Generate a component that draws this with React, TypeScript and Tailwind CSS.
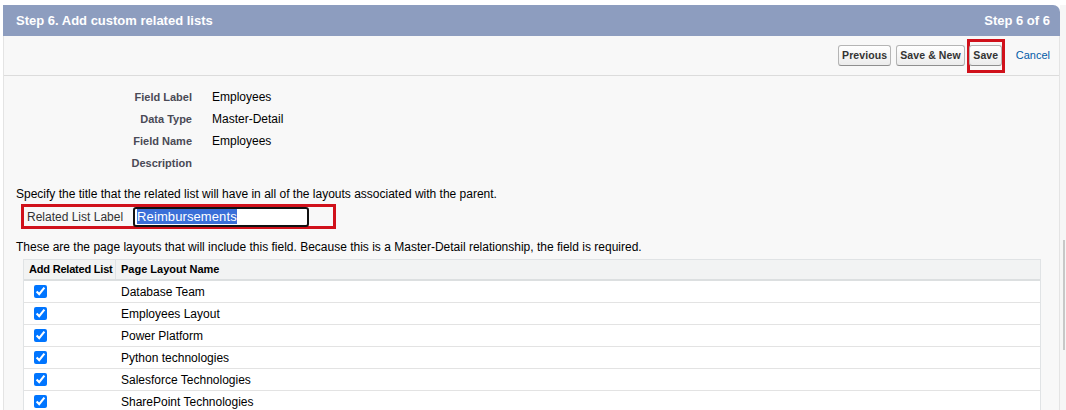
import React from "react";

const rows = [
  "Database Team",
  "Employees Layout",
  "Power Platform",
  "Python technologies",
  "Salesforce Technologies",
  "SharePoint Technologies",
];

const fields: [string, string][] = [
  ["Field Label", "Employees"],
  ["Data Type", "Master-Detail"],
  ["Field Name", "Employees"],
  ["Description", ""],
];

function Btn({ children }: { children: React.ReactNode }) {
  return (
    <button className="h-[21px] px-[3px] rounded-[3px] border border-[#b5b5b5] border-b-[#8f8f8f] bg-gradient-to-b from-white to-[#ececec] text-[10.5px] font-bold text-[#333] leading-none tracking-[0.1px]">
      {children}
    </button>
  );
}

export default function App() {
  return (
    <div
      className="w-[1066px] h-[410px] overflow-hidden bg-white flex pt-[5px] pl-[3px]"
      style={{ fontFamily: '"Liberation Sans", Arial, sans-serif' }}
    >
      <div className="w-[1057px] flex flex-col shrink-0">
        <div className="h-[31px] shrink-0 bg-[#8d9dbf] rounded-tr-[7px] flex items-center justify-between pl-[13px] pr-[10px] text-white font-bold text-[13px]">
          <span>Step 6. Add custom related lists</span>
          <span>Step 6 of 6</span>
        </div>
        <div className="flex-1 bg-[#f8f8f8] border-l border-r border-[#e4e4e4]">
          <div className="h-[40px] flex items-center justify-end border-b border-[#dcdcdc] pr-[9px]">
            <div className="flex items-center gap-[5px]">
              <Btn>Previous</Btn>
              <Btn>Save &amp; New</Btn>
            </div>
            <div className="ml-[2px] w-[38px] h-[34px] border-[3px] border-[#d0111b] flex items-center justify-center">
              <Btn>Save</Btn>
            </div>
            <span className="ml-[11px] text-[11px] text-[#015ba7]">Cancel</span>
          </div>

          <div className="pt-[10px] flex flex-col">
            {fields.map(([l, v]) => (
              <div key={l} className="h-[22px] flex items-center">
                <div className="w-[188px] text-right text-[11px] font-bold text-[#4a4a56]">{l}</div>
                <div className="ml-[20px] text-[12px] text-black">{v}</div>
              </div>
            ))}
          </div>

          <div className="mt-[13px] pl-[12px] text-[12px] text-black leading-[14px]">
            Specify the title that the related list will have in all of the layouts associated with the parent.
          </div>
          <div className="ml-[17px] mt-[3px] w-[315px] h-[25px] border-[3px] border-[#d0111b] flex items-center">
            <span className="ml-[3px] text-[12px] text-[#333]">Related List Label</span>
            <div className="ml-[10px] w-[176px] h-[20px] border-2 border-[#111] rounded-[3px] bg-white flex items-center pl-[2px]">
              <span className="bg-[#3a6fd8] text-white text-[13px] leading-[15px] tracking-[0.1px]">Reimbursements</span>
            </div>
          </div>
          <div className="mt-[11px] pl-[12px] text-[12px] text-black leading-[14px]">
            These are the page layouts that will include this field. Because this is a Master-Detail relationship, the field is required.
          </div>

          <div className="mt-[5px] ml-[19px] mr-[18px] border border-[#e0e3e5] bg-white">
            <div className="h-[21px] flex items-center bg-[#f2f3f3] border-b-2 border-[#dcdfe0] text-[11px] font-bold text-black">
              <div className="w-[92px] h-full flex items-center pl-[5px] border-r border-[#e0e3e5] whitespace-nowrap tracking-[-0.2px]">Add Related List</div>
              <div className="pl-[5px] whitespace-nowrap">Page Layout Name</div>
            </div>
            {rows.map((r) => (
              <div key={r} className="h-[22px] flex items-center border-b border-[#e3e3e3] text-[12px] text-black">
                <div className="w-[92px] flex items-center pl-[10px]">
                  <input type="checkbox" defaultChecked readOnly className="w-[13px] h-[13px] m-0 accent-[#0075ff]" />
                </div>
                <div className="pl-[5px]">{r}</div>
              </div>
            ))}
          </div>
        </div>
      </div>
      <div className="flex-1 bg-[#f6f6f6] flex justify-end pr-[1px]">
        <div className="w-[2px] mt-[235px] h-[110px] bg-[#c8c8c8]" />
      </div>
    </div>
  );
}
